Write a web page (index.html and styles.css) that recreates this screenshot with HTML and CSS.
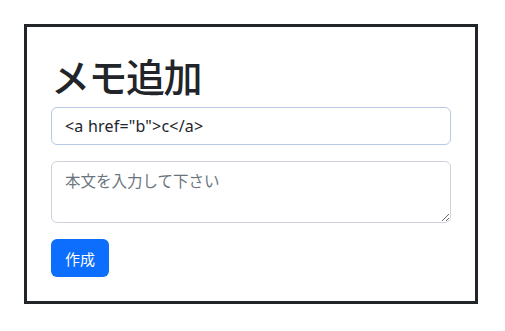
FILE: index.html
```html
<!DOCTYPE html>
<html lang="ja">
<head>
<meta charset="utf-8">
<link rel="stylesheet" href="styles.css">
</head>
<body>
<div class="card">
  <h1 class="title">メモ追加</h1>
  <form class="memo-form">
    <input class="field field-title" type="text" value="&lt;a href=&quot;b&quot;&gt;c&lt;/a&gt;">
    <textarea class="field field-body" placeholder="本文を入力して下さい"></textarea>
    <button class="btn" type="button">作成</button>
  </form>
</div>
</body>
</html>
```
FILE: styles.css
```css
* { box-sizing: border-box; }
html, body { margin: 0; padding: 0; background: #fff; }
body {
  padding: 24px;
  font-family: "Noto Sans", "Noto Sans CJK JP", sans-serif;
  color: #212529;
}
.card {
  width: 454px;
  height: 280px;
  border: 3px solid #212529;
  padding: 24px;
}
.title {
  margin: 0 0 8px;
  height: 48px;
  font-family: "Noto Sans CJK JP", sans-serif;
  font-size: 39px;
  font-weight: 500;
  line-height: 48px;
  letter-spacing: -1.5px;
  color: #212529;
}
.memo-form {
  display: flex;
  flex-direction: column;
  align-items: flex-start;
  gap: 16px;
}
.field {
  width: 400px;
  border: 1px solid #ced4da;
  border-radius: 6px;
  padding: 6px 13px;
  font-family: "Noto Sans", "Noto Sans CJK JP", sans-serif;
  font-size: 15.5px;
  color: #212529;
  background: #fff;
  outline: none;
}
.field-title {
  height: 38px;
  border-color: #b8c8e6;
  font-size: 16px;
  letter-spacing: 0.2px;
}
.field-body {
  height: 62px;
  resize: vertical;
  padding-top: 7px;
}
.field-body::placeholder { color: #6c757d; }
.btn {
  height: 38px;
  width: 58px;
  padding: 0;
  border: none;
  border-radius: 6px;
  background: #0d6efd;
  color: #fff;
  font-family: "Noto Sans CJK JP", sans-serif;
  font-size: 15px;
}
```
